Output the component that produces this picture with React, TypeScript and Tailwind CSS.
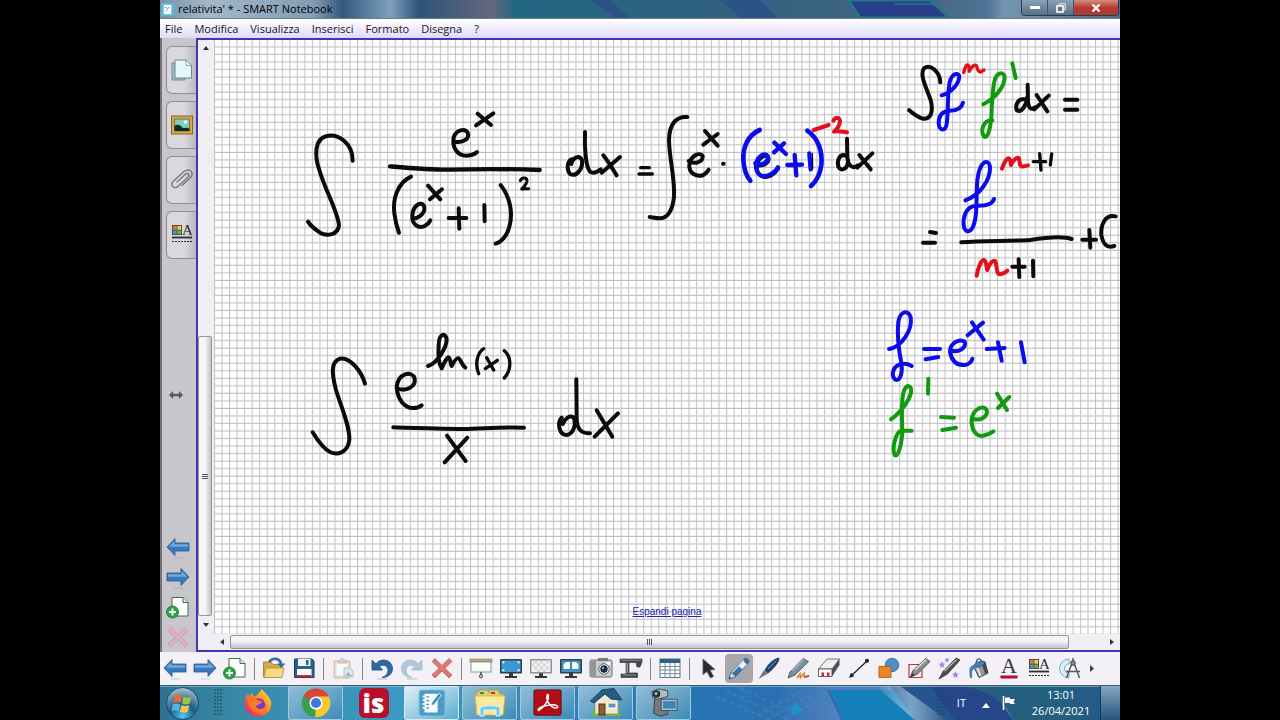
import type { ReactNode } from "react";

type Stroke = { d: string; c?: string; w?: number };

const BLUE = "#0c0cea";
const RED = "#e2101a";
const GREEN = "#109a10";
const INK = "#0b0b0b";

const inkGroups: { x: number; y: number; strokes: Stroke[] }[] = [
  {
    x: 300,
    y: 90,
    strokes: [
      { d: "M158 212 C158 160 115 130 80 138 C45 146 42 195 58 240 C75 300 112 360 117 405 C115 435 80 440 60 428 C45 418 32 408 24 395" },
      { d: "M465 155 C490 160 510 145 503 128 C495 113 468 120 461 142 C455 175 475 198 500 197 C515 196 525 192 531 186" },
      { d: "M533 71 L573 105 M580 70 L528 106" },
      { d: "M270 229 C330 234 400 240 450 239 C550 236 640 237 719 240", w: 13 },
      { d: "M333 260 C290 280 278 330 283 370 C286 395 292 415 297 428" },
      { d: "M338 385 C360 385 378 365 372 348 C364 332 340 345 337 375 C335 405 355 415 372 409 C382 405 388 398 391 391" },
      { d: "M384 287 L421 328 M426 298 L390 328" },
      { d: "M446 384 L499 384 M476 355 L478 416 M553 345 L554 394" },
      { d: "M602 285 C630 320 640 370 628 410 C620 440 605 455 587 461" },
      { d: "M661 272 C665 262 680 262 681 271 C682 282 672 290 665 297 L686 296", w: 9 },
      { d: "M815 208 C800 215 800 240 810 252 C830 262 850 235 846 210 C838 195 820 200 814 222 M855 126 C853 170 857 230 870 245 C880 252 893 245 902 238" },
      { d: "M910 196 C925 215 940 240 950 256 M960 201 L905 248" },
    ],
  },
  {
    x: 620,
    y: 100,
    strokes: [
      { d: "M62 203 L88 203 M57 222 L97 222", w: 10 },
      { d: "M202 51 C170 48 148 70 147 120 C148 180 165 230 162 290 C158 335 140 355 120 355 C108 355 98 352 89 351" },
      { d: "M206 183 C225 195 250 185 248 168 C240 155 212 165 208 195 C206 220 230 232 250 225 C258 220 263 214 266 209" },
      { d: "M255 93 L293 137 M293 102 L250 134 M309 191 L311 191" },
      { d: "M419 90 C385 105 368 140 370 180 C372 210 380 230 391 242", c: BLUE, w: 14 },
      { d: "M409 196 C428 202 450 189 446 173 C438 160 411 174 411 204 C414 231 434 237 453 227 C465 221 471 213 475 206", w: 10 },
      { d: "M406 190 C425 200 448 185 443 168 C435 155 408 170 408 200 C410 228 430 234 450 224 C462 218 470 210 474 202", c: BLUE, w: 13 },
      { d: "M463 128 L498 162 M492 130 L462 157", c: BLUE, w: 13 },
      { d: "M502 195 L546 194 M524 165 L529 226 M568 160 L572 208", c: BLUE, w: 13 },
      { d: "M577 160 L578 206", w: 4 },
      { d: "M562 92 C595 115 608 155 604 195 C600 225 588 245 573 258", c: BLUE, w: 14 },
      { d: "M581 90 L626 75 M640 62 C645 50 662 52 660 65 C658 80 648 90 642 95 C655 92 668 95 681 97", c: RED },
      { d: "M677 167 C660 160 650 180 655 200 C665 218 685 205 684 180 M681 116 L682 170 C683 198 700 208 714 196" },
      { d: "M718 165 L752 208 M757 160 L712 203" },
    ],
  },
  {
    x: 870,
    y: 50,
    strokes: [
      { d: "M211 97 C210 65 180 40 162 55 C148 75 168 110 182 150 C192 190 180 208 158 206 C140 200 128 190 117 180" },
      { d: "M215 136 C245 128 268 100 268 78 C262 65 240 72 237 110 C232 150 235 190 230 222 C226 245 208 243 206 220 C206 195 218 183 240 182 C262 182 275 175 279 158", c: BLUE },
      { d: "M281 68 C284 55 288 45 292 45 C300 45 296 60 298 64 C304 50 314 42 320 48 C322 60 325 66 332 66 L342 60", c: RED, w: 10 },
      { d: "M340 163 C375 145 405 110 404 80 C400 62 378 68 373 95 C366 130 366 160 364 200 C360 250 350 265 342 260 C332 245 336 210 367 211 M427 40 L437 84", c: GREEN },
      { d: "M462 148 C445 145 435 165 440 180 C455 190 470 165 472 140 M473 104 L474 155 C477 178 485 180 495 172 M500 135 L532 184 M536 137 L493 178" },
      { d: "M585 149 L622 149 M585 179 L622 179" },
      { d: "M286 451 C330 435 362 390 360 350 C355 325 330 330 322 390 C318 440 322 480 315 510 C308 545 292 552 283 535 C275 505 288 468 318 467 C350 468 368 462 372 447", c: BLUE },
      { d: "M396 356 C402 338 410 324 416 325 C424 328 420 340 423 345 C430 330 440 320 447 325 C450 338 448 350 458 350 L474 346", c: RED },
      { d: "M490 335 L527 335 M509 311 L513 360 M545 312 L541 345", w: 10 },
      { d: "M180 546 L198 549 M159 578 L195 578" },
      { d: "M274 577 C340 572 420 574 480 570 C530 562 580 558 605 567" },
      { d: "M637 569 L678 569 M658 540 L661 593" },
      { d: "M737 499 C705 492 692 525 694 555 C700 588 715 594 733 588" },
      { d: "M320 677 C325 650 335 628 342 630 C352 635 348 655 352 660 C358 640 370 628 376 634 C382 650 378 672 390 673 C400 672 406 668 412 662", c: RED },
      { d: "M427 650 L464 650 M446 628 L448 681 M489 632 L490 679" },
    ],
  },
  {
    x: 290,
    y: 320,
    strokes: [
      { d: "M225 191 C215 155 180 110 150 116 C122 125 125 160 138 210 C155 265 180 320 178 360 C172 402 140 405 120 396 C98 385 82 360 68 337" },
      { d: "M324 206 C350 215 378 200 374 175 C365 150 325 160 320 200 C322 240 345 265 370 264 C382 264 390 260 395 256" },
      { d: "M414 138 C440 130 470 85 470 58 C468 40 448 35 446 75 C444 105 445 130 455 145 C462 130 468 115 475 112 C484 115 480 135 485 138 C492 125 500 112 506 115 C514 120 515 135 526 143" },
      { d: "M581 86 C560 100 555 135 566 161 M590 113 L611 150 M622 121 L586 146 M643 92 C665 110 665 150 643 174", w: 10 },
      { d: "M310 322 C370 325 440 325 520 327 C580 326 640 320 702 323" },
      { d: "M471 347 L527 423 M532 353 L464 427" },
      { d: "M815 293 C800 310 808 345 830 345 C852 340 860 310 850 292 C840 285 825 295 818 312 M859 178 L860 290 C860 325 870 340 900 340" },
      { d: "M920 271 L967 350 M984 280 L914 350" },
    ],
  },
  {
    x: 870,
    y: 300,
    strokes: [
      { d: "M57 147 C95 140 128 90 122 52 C115 30 92 30 85 65 C80 110 88 160 95 195 C98 230 85 245 75 238 C62 225 68 195 98 192 C110 190 118 194 125 198", c: BLUE },
      { d: "M162 147 L210 147 M167 178 L205 171", c: BLUE },
      { d: "M243 152 C265 158 290 145 284 125 C270 115 240 128 240 155 C245 185 262 197 285 195 C300 192 305 185 307 176", c: BLUE },
      { d: "M306 67 L341 119 M339 68 L293 106 M350 147 L404 144 M384 127 L395 182 M453 127 L464 187", c: BLUE },
      { d: "M63 358 C95 335 128 290 123 265 C115 250 100 258 97 300 C94 340 97 370 97 400 C92 450 82 470 75 466 C65 450 75 395 95 392 L125 392", c: GREEN },
      { d: "M175 236 L174 281 M213 351 L252 353 M217 390 L258 383", c: GREEN },
      { d: "M306 355 C330 365 355 350 350 330 C340 315 312 325 305 355 C303 390 318 408 335 408 C350 405 362 400 370 394", c: GREEN },
      { d: "M381 281 L411 330 M418 291 L384 324", c: GREEN },
    ],
  },
];

function Ink() {
  return (
    <svg className="block h-[594px] w-[906px] flex-none" viewBox="214 40 906 594" role="img" aria-label="Integrali">
      {inkGroups.map((g, i) => (
        <g key={i} transform={`translate(${g.x} ${g.y}) scale(0.33333)`} fill="none" strokeLinecap="round" strokeLinejoin="round">
          {g.strokes.map((s, j) => (
            <path key={j} d={s.d} stroke={s.c ?? INK} strokeWidth={s.w ?? 12} />
          ))}
        </g>
      ))}
    </svg>
  );
}

function Paper() {
  return (
    <svg className="absolute inset-0 h-full w-full" aria-hidden="true">
      <defs>
        <pattern id="squares" width="7.53" height="7.53" patternUnits="userSpaceOnUse">
          <path d="M0.5 0 V7.53 M0 7 H7.53" stroke="#c2c2c4" strokeWidth="1.1" fill="none" />
        </pattern>
      </defs>
      <rect width="100%" height="100%" fill="#ffffff" />
      <rect width="100%" height="100%" fill="url(#squares)" />
    </svg>
  );
}

function Svg({ children }: { children: ReactNode }) {
  return (
    <svg viewBox="0 0 24 24" className="size-6 overflow-visible" aria-hidden="true">
      {children}
    </svg>
  );
}

const ArrowIcon = ({ flip = false }: { flip?: boolean }) => (
  <Svg>
    <g transform={flip ? "translate(24 0) scale(-1 1)" : undefined}>
      <path d="M1 11 L9 2.5 V7 H23 V15 H9 V19.5Z" fill="#3978bd" stroke="#27588f" strokeWidth="0.8" strokeLinejoin="round" />
      <path d="M3 10.8 L8.3 5 V8.3 H22 V10.8Z" fill="#6ea8dc" />
    </g>
    <path d="M8 22 H17" stroke="#77777a" strokeOpacity="0.4" strokeWidth="0.8" />
  </Svg>
);

const AddPageIcon = () => (
  <Svg>
    <path d="M6 1.5 H17 L22 6.5 V20 H6Z" fill="#fbfefb" stroke="#3f6a55" />
    <path d="M17 1.5 V6.5 H22" fill="#dce9e2" stroke="#3f6a55" />
    <circle cx="6.5" cy="16" r="6" fill="#2ca345" stroke="#17762c" strokeWidth="0.8" />
    <path d="M6.5 12.6 V19.4 M3.1 16 H9.9" stroke="#fff" strokeWidth="2" />
  </Svg>
);

const CrossIcon = ({ color, edge }: { color: string; edge: string }) => (
  <Svg>
    <path d="M2 4.5 L5 1.5 L12 8.5 L19 1.5 L22 4.5 L14.8 11.2 L22 18 L19 21 L12 14 L5 21 L2 18 L9.2 11.2Z" fill={color} stroke={edge} strokeWidth="0.8" />
  </Svg>
);

const OpenIcon = () => (
  <Svg>
    <path d="M1.5 5 H9 L11 7.5 H19 V20 H1.5Z" fill="#d5a949" stroke="#9a7422" strokeWidth="0.8" />
    <path d="M2 20.5 L4 11 H22 L20 20.5Z" fill="#f6da86" stroke="#b08a33" strokeWidth="0.8" />
    <path d="M7 5 C11 0 18 1 19 7" fill="none" stroke="#336e9e" strokeWidth="2.6" />
    <path d="M15 6.5 H23.5 L19.5 11Z" fill="#336e9e" />
  </Svg>
);

const SaveIcon = () => (
  <Svg>
    <path d="M2.5 2 H20 L22 4 V20.5 H2.5Z" fill="#28628c" stroke="#173f60" />
    <rect x="6" y="2" width="12.5" height="7" fill="#eef4f8" />
    <rect x="14" y="3" width="2.5" height="5" fill="#28628c" />
    <rect x="5" y="12" width="14.5" height="8" fill="#fff" />
    <rect x="5" y="18" width="14.5" height="2.2" fill="#d0233a" />
  </Svg>
);

const PasteIcon = () => (
  <Svg>
    <g opacity="0.65">
      <rect x="3" y="4" width="16" height="17" rx="1" fill="#e6ceb2" stroke="#ba9b80" />
      <rect x="5.5" y="6.5" width="11" height="12" fill="#fff" />
      <path d="M7.5 6 V3.5 H9.5 C9.5 0.5 13 0.5 13 3.5 H15 V6Z" fill="#c5c5c8" stroke="#8d8d90" strokeWidth="0.7" />
      <path d="M13 11 H18.5 L22 14 V20 H13Z" fill="#d5e6e4" stroke="#8caaa9" />
      <path d="M14 19 L17 15 L21 19Z" fill="#6d9ba0" />
    </g>
  </Svg>
);

const UndoIcon = ({ redo = false }: { redo?: boolean }) => (
  <Svg>
    <g transform={redo ? "translate(24 0) scale(-1 1)" : undefined} opacity={redo ? 0.55 : 1}>
      <path d="M6 7 C10 0.500 22 2 22.500 11.500 C22.500 17 18 20.500 12 20.500 C17 18.500 19 15 17.500 11 C16 7.500 12 7.500 9.500 9.500 L12.500 13 L2 13 L2 3Z" fill={redo ? "#7aa6c6" : "#2b6ba3"} stroke={redo ? "#668ba8" : "#1b4d80"} strokeWidth="0.8" strokeLinejoin="round" />
    </g>
    <path d="M7 22 H17" stroke="#bdbdc2" />
  </Svg>
);

const ShadeIcon = () => (
  <Svg>
    <rect x="1" y="2" width="22" height="3" fill="#c2a77a" stroke="#86724f" strokeWidth="0.6" />
    <rect x="2" y="5" width="20" height="10" fill="#f4fffa" stroke="#6e8580" strokeWidth="0.8" />
    <path d="M12 15 V18" stroke="#444" strokeWidth="1.4" />
    <circle cx="12" cy="19.3" r="1.6" fill="#ddd" stroke="#444" />
  </Svg>
);

const ScreenIcon = ({ kind }: { kind: "full" | "clear" | "dual" }) => (
  <Svg>
    <path d="M10 16 H14 V19 H18 V21 H6 V19 H10Z" fill="#37383b" />
    <rect x="1" y="2" width="22" height="14.5" rx="0.8" fill={kind === "clear" ? "#8f9093" : "#32404c"} />
    <rect x="2.5" y="3.5" width="19" height="11.5" fill={kind === "clear" ? "#f3f3f3" : "#3f97d2"} />
    {kind === "full" && (
      <path d="M4 6.5 V5 H5.5 M18.500 5 H20 V6.5 M20 12 V13.5 H18.500 M5.5 13.5 H4 V12" fill="none" stroke="#d9f3ff" strokeWidth="1.3" />
    )}
    {kind === "clear" && (
      <path d="M5 3.5h3v3h-3zM11 3.5h3v3h-3zM17 3.5h3v3h-3zM2.5 6.5h2.5v3h-2.5zM8 6.5h3v3h-3zM14 6.5h3v3h-3zM5 9.5h3v3h-3zM11 9.5h3v3h-3zM17 9.5h3v3h-3zM8 12.5h3v2.5h-3zM14 12.5h3v2.5h-3z" fill="#d4d5d6" />
    )}
    {kind === "dual" && (
      <g fill="#f5fbfa" stroke="#26678b" strokeWidth="0.7">
        <path d="M4 12.5 V7 L7 4.5 H11.5 V12.5Z" />
        <path d="M12.5 12.5 V4.5 H17 L20 7 V12.5Z" />
      </g>
    )}
  </Svg>
);

const CameraIcon = () => (
  <Svg>
    <rect x="1" y="3" width="22" height="17" rx="1.5" fill="#c9cacb" stroke="#6c6d70" />
    <rect x="2" y="4" width="5" height="15" fill="#929497" />
    <rect x="9" y="1" width="10" height="3" fill="#77797c" />
    <rect x="16.5" y="5" width="5" height="3" fill="#f8f8f8" />
    <circle cx="15" cy="12" r="5.3" fill="#ececec" stroke="#6a6b6e" />
    <circle cx="15" cy="12" r="3.7" fill="#1b2a41" />
    <circle cx="14" cy="11" r="1.2" fill="#7ca1c8" />
  </Svg>
);

const DocCameraIcon = () => (
  <Svg>
    <path d="M1 2 H23 V5 L21 10 H18 L17 5.5 H10 V16 H18.5 V20.5 H2 V17 H7 V5.5 H1Z" fill="#48494c" stroke="#2c2d30" strokeWidth="0.6" />
    <path d="M2 3.2 H22 M4 18 H17" stroke="#97989a" strokeWidth="0.9" />
    <path d="M8.2 6 V16" stroke="#b0b1b3" strokeWidth="1.2" />
  </Svg>
);

const TableIcon = () => (
  <Svg>
    <rect x="2" y="2" width="20" height="18.5" fill="#fff" stroke="#5d7283" />
    <rect x="2" y="2" width="20" height="4" fill="#2e6388" />
    <path d="M2 9.5 H22 M2 13 H22 M2 16.7 H22 M7 6 V20.5 M12 6 V20.5 M17 6 V20.5" stroke="#71899a" strokeWidth="1" />
  </Svg>
);

const PointerIcon = () => (
  <Svg>
    <path d="M6 2 V17.5 L10 14.5 L13.5 21 L16.5 19.5 L13 13 L18 12.5Z" fill="#2b2b2d" stroke="#5c5c5f" strokeWidth="0.8" />
  </Svg>
);

const PenIcon = () => (
  <Svg>
    <path d="M2 22 L4 15.5 L17 2 C19 0.500 23 3 21.500 5.500 L8.500 19.500Z" fill="#3674ab" stroke="#2c4b6b" strokeWidth="0.8" />
    <path d="M11 8.200 L15.500 3.600 L19.800 7.300 L15 12.200Z" fill="#eef3f6" />
    <path d="M5 15.500 L17 3.200" stroke="#c5dbec" strokeWidth="1.4" />
    <path d="M2 22 L4 15.500 L8.500 19.500Z" fill="#e2e0da" stroke="#56616c" strokeWidth="0.500" />
    <path d="M2 22 L2.800 19.500 L4.500 21Z" fill="#244c78" />
  </Svg>
);

const BrushIcon = () => (
  <Svg>
    <path d="M8 13 C12 6 17 2 22 1 C22.500 4 17.500 11 11 16Z" fill="#1d4772" stroke="#102e50" strokeWidth="0.8" />
    <path d="M1.500 22 L7 13 L11 16.500Z" fill="#70767d" />
    <path d="M11 12 L19.5 3.5" stroke="#6f9bc3" strokeWidth="1" />
  </Svg>
);

const CreativePenIcon = () => (
  <Svg>
    <path d="M1 21 L3 15 L16 1.5 L21.5 4.5 L8 18Z" fill="#7f9197" stroke="#3f484c" strokeWidth="0.8" />
    <path d="M5 13.8 L16.5 2.5" stroke="#b59be0" strokeWidth="1.8" />
    <path d="M8 16 L19.5 4.5" stroke="#5ca58f" strokeWidth="1.4" />
    <path d="M10 21 L13 17 L13.5 20.5 L17 16.5 L17.5 20 L22 19" fill="none" stroke="#d68b2f" strokeWidth="1.7" />
    <path d="M17.5 20 L22 19" stroke="#c6333c" strokeWidth="1.5" />
  </Svg>
);

const EraserIcon = () => (
  <Svg>
    <path d="M1.5 12 L10 2 H22.5 L15 12Z" fill="#eeeeef" stroke="#555" strokeWidth="0.8" />
    <path d="M15 12 L22.5 2 V8 L15 19.5Z" fill="#505054" />
    <path d="M1.5 12 H15 V19.5 H1.5Z" fill="#fbfbfb" stroke="#444" strokeWidth="0.8" />
    <path d="M4.5 15.5 H7 V19.5 H4.5Z M10 15.5 H12.5 V19.5 H10Z" fill="#c7283a" />
  </Svg>
);

const LineIcon = () => (
  <Svg>
    <path d="M4 19 L20 4" stroke="#202022" strokeWidth="1.3" />
    <circle cx="20" cy="3.8" r="2" fill="#202022" />
    <path d="M2 21 L4 15.8 L7.3 19.2Z" fill="#202022" />
  </Svg>
);

const ShapesIcon = () => (
  <Svg>
    <circle cx="15" cy="8" r="6.8" fill="#4a90c8" stroke="#2d6494" strokeWidth="0.8" />
    <rect x="2" y="9.5" width="12" height="11" fill="#f08423" stroke="#a85610" strokeWidth="0.8" />
  </Svg>
);

const ShapePenIcon = () => (
  <Svg>
    <path d="M14 7.5 H2 V20.5 H15 V13" fill="none" stroke="#c72f3d" strokeWidth="1.2" />
    <path d="M3.500 20 L6 13.500 L18.5 1.5 L23 4.5 L10.500 17Z" fill="#8b8e91" stroke="#414346" strokeWidth="0.9" />
    <path d="M8 13 L19 2.5" stroke="#e1e2e4" strokeWidth="1.5" />
    <path d="M3.500 20 L5 16 L8 18.200Z" fill="#333" />
  </Svg>
);

const MagicPenIcon = () => (
  <Svg>
    <path d="M2 22 L6 14.5 L19 1 L23 3 L10.5 17Z" fill="#4b4d51" stroke="#25262a" strokeWidth="0.7" />
    <path d="M7.5 14 L19.5 2.5" stroke="#bfc0c4" strokeWidth="1.1" />
    <path d="M5 4 L6 6.5 L8.5 6.7 L6.6 8.3 L7.3 11 L5 9.5 L2.7 11 L3.4 8.3 L1.5 6.7 L4 6.5Z M10 0.5 L10.7 2 L12.5 2.3 L11.2 3.5 L11.5 5.2 L10 4.4 L8.5 5.2 L8.8 3.5 L7.5 2.3 L9.3 2Z M18.5 14 L19.5 16.5 L22 16.7 L20.1 18.3 L20.8 21 L18.5 19.5 L16.2 21 L16.9 18.3 L15 16.7 L17.5 16.5Z" fill="#a184e4" />
  </Svg>
);

const FillIcon = () => (
  <Svg>
    <path d="M9 8 C9 0 15 0 15 7" fill="none" stroke="#555" strokeWidth="1.3" />
    <path d="M6.500 9 L18 5 L21 16 L12 20.5Z" fill="#97989b" stroke="#3f4043" />
    <path d="M15 7 L18 5.5 L20.5 15.5 L18 17Z" fill="#434448" />
    <path d="M10 10 L13.5 19" stroke="#e5e5e6" strokeWidth="2" />
    <ellipse cx="12.5" cy="7.2" rx="6" ry="2.5" transform="rotate(-20 12.5 7.2)" fill="#3f7fb8" stroke="#33475b" strokeWidth="0.7" />
    <path d="M8 8 C1.500 8.500 2 13 3 21 C5 22 5.500 20 5 16 C5 12.5 7 12 9.5 11Z" fill="#3c80bb" />
  </Svg>
);

const TextIcon = () => (
  <Svg>
    <text x="12" y="16" textAnchor="middle" fontSize="22" fill="#333335" className="font-['Liberation_Serif',serif]">A</text>
    <rect x="3.5" y="18.5" width="17" height="3" fill="#b3093d" />
  </Svg>
);

const PropertiesIcon = () => (
  <Svg>
    <rect x="2" y="2" width="10" height="10" fill="#4c4c45" />
    <path d="M3 3h3.7v3.7h-3.7z" fill="#df7b31" />
    <path d="M7.4 3h3.7v3.7h-3.7z" fill="#f0cf46" />
    <path d="M3 7.4h3.7v3.7h-3.7z" fill="#4a91cd" />
    <path d="M7.4 7.4h3.7v3.7h-3.7z" fill="#6fae4a" />
    <text x="17.5" y="12" textAnchor="middle" fontSize="15" fill="#2d2d30" className="font-['Liberation_Serif',serif]">A</text>
    <path d="M2 14.5 H22" stroke="#2d2d30" strokeWidth="1.8" />
    <path d="M2 18.5 H22" stroke="#2d2d30" strokeWidth="1.2" strokeDasharray="2 1" />
  </Svg>
);

const MeasureIcon = () => (
  <Svg>
    <path d="M12 2 A9.5 9.5 0 0 0 12 21 V16 A4.5 4.5 0 0 1 12 7Z" fill="#d8edf5" stroke="#74a5ba" strokeWidth="0.9" />
    <path d="M16 1 V5 M15 6 L9.5 21 M17 6 L22.5 21 M9 14.5 H23" fill="none" stroke="#55585c" strokeWidth="1.5" />
    <circle cx="16" cy="6" r="2.3" fill="#8a8d91" stroke="#44474b" />
  </Svg>
);

type Tool = { name: string; icon: ReactNode; active?: boolean };
const toolGroups: Tool[][] = [
  [
    { name: "Pagina precedente", icon: <ArrowIcon /> },
    { name: "Pagina successiva", icon: <ArrowIcon flip /> },
    { name: "Aggiungi pagina", icon: <AddPageIcon /> },
  ],
  [
    { name: "Apri", icon: <OpenIcon /> },
    { name: "Salva", icon: <SaveIcon /> },
  ],
  [{ name: "Incolla", icon: <PasteIcon /> }],
  [
    { name: "Annulla", icon: <UndoIcon /> },
    { name: "Ripeti", icon: <UndoIcon redo /> },
    { name: "Elimina", icon: <CrossIcon color="#df766f" edge="#b9655f" /> },
  ],
  [
    { name: "Tendina", icon: <ShadeIcon /> },
    { name: "Schermo intero", icon: <ScreenIcon kind="full" /> },
    { name: "Sfondo trasparente", icon: <ScreenIcon kind="clear" /> },
    { name: "Due pagine", icon: <ScreenIcon kind="dual" /> },
    { name: "Cattura schermo", icon: <CameraIcon /> },
    { name: "Document camera", icon: <DocCameraIcon /> },
  ],
  [{ name: "Tabella", icon: <TableIcon /> }],
  [
    { name: "Seleziona", icon: <PointerIcon /> },
    { name: "Penna", icon: <PenIcon />, active: true },
    { name: "Penna calligrafica", icon: <BrushIcon /> },
    { name: "Penna creativa", icon: <CreativePenIcon /> },
    { name: "Cancellino", icon: <EraserIcon /> },
    { name: "Linea", icon: <LineIcon /> },
    { name: "Forme", icon: <ShapesIcon /> },
    { name: "Penna riconoscimento forme", icon: <ShapePenIcon /> },
    { name: "Penna magica", icon: <MagicPenIcon /> },
    { name: "Riempimento", icon: <FillIcon /> },
    { name: "Testo", icon: <TextIcon /> },
    { name: "Stile", icon: <PropertiesIcon /> },
    { name: "Strumenti di misurazione", icon: <MeasureIcon /> },
  ],
];

function Toolbar() {
  return (
    <div role="toolbar" aria-label="Strumenti" className="flex h-[33px] flex-none items-center bg-[#f3f0f6]">
      {toolGroups.map((group, i) => (
        <div key={i} className="flex flex-none items-center">
          {i > 0 && (
            <span className="flex w-[9px] flex-none justify-center">
              <span className="h-[22px] w-px bg-[#88868b]" />
            </span>
          )}
          {group.map((t) => (
            <button key={t.name} aria-label={t.name} className="flex h-8 w-[30px] flex-none items-center justify-center">
              <span className={t.active ? "flex h-[29px] w-7 items-center justify-center rounded-sm bg-[#a9a7ac]" : "flex"}>{t.icon}</span>
            </button>
          ))}
        </div>
      ))}
      <button aria-label="Altri strumenti" className="flex h-8 w-4 flex-none items-center justify-center">
        <svg viewBox="0 0 4 7" className="h-[7px] w-1" aria-hidden="true">
          <path d="M0 0 L4 3.5 L0 7Z" fill="#3a3a3c" />
        </svg>
      </button>
    </div>
  );
}

const PagesIcon = () => (
  <Svg>
    <path d="M2 5 H15 V22 H2Z" fill="#9fbfc7" stroke="#5d808b" strokeWidth="0.8" />
    <path d="M5 2 H16 L21.5 7.5 V20 H5Z" fill="#e6f6fa" stroke="#5d808b" strokeWidth="0.9" />
    <path d="M16 2 V7.5 H21.5Z" fill="#fff" stroke="#5d808b" strokeWidth="0.7" />
  </Svg>
);

const GalleryIcon = () => (
  <Svg>
    <rect x="1.5" y="3" width="21" height="18" fill="#d8a84f" stroke="#8a6420" />
    <rect x="4.5" y="6" width="15" height="12" fill="#7ed0b9" stroke="#705120" strokeWidth="0.7" />
    <circle cx="15.5" cy="9" r="1.8" fill="#effff8" />
    <path d="M4.5 13 C8 10 11 13 13 15 C15 15 18 14 19.5 16 V18 H4.5Z" fill="#0d2d25" />
  </Svg>
);

const ClipIcon = () => (
  <Svg>
    <path d="M7 14 L15 6.5 C18 4 20 7 18 9 L8.5 18 C4 22 -0.5 17 3.5 13 L14 3.5 C20 -0.5 25 5 20 10 L12 17.5" fill="none" stroke="#76767a" strokeWidth="1.4" strokeLinecap="round" />
  </Svg>
);

const sideTabs = [
  { name: "Pagine", icon: <PagesIcon /> },
  { name: "Raccolta", icon: <GalleryIcon /> },
  { name: "Allegati", icon: <ClipIcon /> },
  { name: "Proprietà", icon: <PropertiesIcon /> },
];

function Sidebar() {
  return (
    <aside className="flex w-9 flex-none flex-col items-center border-l-2 border-[#747277] bg-[#c9c6cb] pt-2">
      <div className="flex w-full flex-col gap-[7px] pl-1">
        {sideTabs.map((t) => (
          <button
            key={t.name}
            aria-label={t.name}
            className="flex h-12 w-full items-center justify-center rounded-l-md border border-r-0 border-[#8f8d92] bg-linear-to-r from-[#dad8dc] from-60% to-[#bab7bd]"
          >
            {t.icon}
          </button>
        ))}
      </div>
      <div className="flex flex-1 items-center pr-1.5 pb-1.5">
        <button aria-label="Ridimensiona barra" className="flex">
          <svg viewBox="0 0 14 8" className="h-2 w-3.5" aria-hidden="true">
            <path d="M0 4 L4 0 V2.8 H10 V0 L14 4 L10 8 V5.2 H4 V8Z" fill="#5b595e" />
          </svg>
        </button>
      </div>
      <div className="flex flex-col gap-1.5 pr-0.5 pb-0.5">
        <button aria-label="Indietro"><ArrowIcon /></button>
        <button aria-label="Avanti"><ArrowIcon flip /></button>
        <button aria-label="Nuova pagina"><AddPageIcon /></button>
        <button aria-label="Elimina pagina"><CrossIcon color="#dcaecb" edge="#c795b6" /></button>
      </div>
    </aside>
  );
}

function Tri({ d, label, className }: { d: string; label: string; className: string }) {
  return (
    <button aria-label={label} className={className}>
      <svg viewBox="0 0 6 6" className="size-1.5" aria-hidden="true">
        <path d={d} fill="#333335" />
      </svg>
    </button>
  );
}

function VerticalScroll() {
  return (
    <div className="flex w-4 flex-none flex-col items-center bg-[#f0eef2]">
      <Tri label="Scorri su" d="M0 5 L3 1 L6 5Z" className="flex h-4 w-full flex-none items-center justify-center" />
      <div className="flex w-full flex-1 flex-col justify-end">
        <div className="flex h-1/2 w-[14px] flex-col items-center justify-center gap-px rounded-xs border border-[#98969b] bg-linear-to-r from-[#f7f6f8] from-50% to-[#c4c2c7]">
          <span className="h-px w-1.5 bg-[#55535a]" />
          <span className="h-px w-1.5 bg-[#55535a]" />
          <span className="h-px w-1.5 bg-[#55535a]" />
        </div>
      </div>
      <Tri label="Scorri giù" d="M0 1 L3 5 L6 1Z" className="flex h-[18px] w-full flex-none items-center justify-center" />
    </div>
  );
}

function HorizontalScroll() {
  return (
    <div className="flex h-4 flex-none items-center bg-[#f0eef2] pl-4">
      <Tri label="Scorri a sinistra" d="M5 0 L1 3 L5 6Z" className="flex h-full w-4 flex-none items-center justify-center" />
      <div className="flex h-full flex-1 items-center">
        <div className="flex h-[14px] w-[96%] items-center justify-center gap-px rounded-xs border border-[#98969b] bg-linear-to-b from-[#f4f3f5] from-45% to-[#c4c2c7]">
          <span className="h-1.5 w-px bg-[#55535a]" />
          <span className="h-1.5 w-px bg-[#55535a]" />
          <span className="h-1.5 w-px bg-[#55535a]" />
        </div>
      </div>
      <Tri label="Scorri a destra" d="M1 0 L5 3 L1 6Z" className="flex h-full w-4 flex-none items-center justify-center" />
    </div>
  );
}

function TitleBar() {
  return (
    <header className="relative flex h-[19px] flex-none items-center overflow-hidden border-b border-[#6d7f8e] bg-[#2c5777]">
      <svg className="absolute inset-0 h-full w-full" viewBox="0 0 960 18" preserveAspectRatio="none" aria-hidden="true">
        <defs>
          <linearGradient id="titleGlass">
            <stop offset="0" stopColor="#7591a8" />
            <stop offset="0.05" stopColor="#a3b8ca" />
            <stop offset="0.16" stopColor="#819db5" />
            <stop offset="0.19" stopColor="#34597d" />
            <stop offset="0.24" stopColor="#7ea0bd" />
            <stop offset="0.27" stopColor="#2c5478" />
            <stop offset="0.345" stopColor="#65667f" />
            <stop offset="0.37" stopColor="#236782" />
            <stop offset="0.6" stopColor="#31617f" />
            <stop offset="0.8" stopColor="#466784" />
            <stop offset="0.86" stopColor="#4e7293" />
            <stop offset="0.88" stopColor="#7596b3" />
            <stop offset="1" stopColor="#4f6c8a" />
          </linearGradient>
        </defs>
        <rect width="960" height="18" fill="url(#titleGlass)" />
        <path d="M688 0 H770 L790 18 H700Z" fill="#284088" stroke="#28758a" strokeWidth="3" />
        <path d="M430 0 H450 L470 18 H455Z M560 0 H600 L618 18 H580Z" fill="#2c4c88" opacity="0.7" />
        <path d="M735 4 H775" stroke="#28758a" strokeWidth="1.5" />
      </svg>
      <div className="relative flex h-full w-full items-center gap-1 pl-px">
        <svg viewBox="0 0 14 14" className="size-[13px]" aria-hidden="true">
          <rect width="14" height="14" rx="1" fill="#5fb7df" />
          <path d="M3 2 H11 V12 H3Z" fill="#fff" />
          <path d="M5 9 L9 4 M4 5 H6" stroke="#418fb7" />
        </svg>
        <h1 className="flex-1 text-[11px] leading-4 text-black">relativita&#39; * - SMART Notebook</h1>
        <div className="mr-px flex h-4 self-start overflow-hidden rounded-b-sm border border-t-0 border-[#273b4e]">
          <button aria-label="Riduci a icona" className="flex w-[26px] items-center justify-center border-r border-[#41566a] bg-linear-to-b from-[#8ba2b6] to-[#566f86]">
            <span className="h-[3px] w-2.5 bg-white" />
          </button>
          <button aria-label="Ripristina" className="flex w-[26px] items-center justify-center border-r border-[#41566a] bg-linear-to-b from-[#8ba2b6] to-[#566f86]">
            <svg viewBox="0 0 10 10" className="size-2.5" aria-hidden="true">
              <path d="M3 2.5 V0.8 H9.2 V7 H7.5" fill="none" stroke="#eee" strokeWidth="1" />
              <rect x="1" y="3" width="6" height="6" fill="#65727d" stroke="#fff" strokeWidth="1.6" />
            </svg>
          </button>
          <button aria-label="Chiudi" className="flex w-11 items-center justify-center bg-linear-to-b from-[#d48c82] via-[#b83b2f] to-[#a83c34]">
            <svg viewBox="0 0 10 8" className="h-2 w-2.5" aria-hidden="true">
              <path d="M1.5 0.5 L8.5 7.5 M8.5 0.5 L1.5 7.5" stroke="#fff" strokeWidth="2.2" />
            </svg>
          </button>
        </div>
      </div>
    </header>
  );
}

const menus = ["File", "Modifica", "Visualizza", "Inserisci", "Formato", "Disegna", "?"];

const Firefox = () => (
  <svg viewBox="0 0 32 32" className="size-[30px]" aria-hidden="true">
    <defs>
      <linearGradient id="fox" x1="1" y1="0" x2="0" y2="1">
        <stop offset="0" stopColor="#ffe43d" />
        <stop offset="0.45" stopColor="#ff8a20" />
        <stop offset="0.8" stopColor="#f33858" />
        <stop offset="1" stopColor="#d51d80" />
      </linearGradient>
    </defs>
    <path d="M20 1 C23 5 28 8 30 15 C31 24 25 30 16 30.5 C7 30 1 24 2 15 C2 10 4 8 5 6 L7 9 L9 5 L12 9 C15 9 17 5 20 1Z" fill="url(#fox)" />
    <circle cx="16.5" cy="18" r="7.2" fill="#743bc4" />
    <path d="M4 11 C9 8 13 10 16 13 L21 14 C19 18 14 17 14 20 C17 25 24 22 25 16 C28 27 14 30 9 23 C6 20 6 14 4 11Z" fill="#fb7827" />
  </svg>
);

const Chrome = () => (
  <svg viewBox="0 0 32 32" className="size-[30px]" aria-hidden="true">
    <path d="M16 16 L2.5 9 A15 15 0 0 1 29.5 9Z" fill="#d94537" />
    <path d="M16 16 L29.5 9 A15 15 0 0 1 15 31Z" fill="#f7c92c" />
    <path d="M16 16 L15 31 A15 15 0 0 1 2.5 9Z" fill="#3c9d4e" />
    <path d="M16 9 H29.5 L22.5 18Z" fill="#f7c92c" />
    <path d="M2.5 9 L9.5 20 L16 16Z" fill="#3c9d4e" />
    <circle cx="16" cy="16" r="7" fill="#fff" />
    <circle cx="16" cy="16" r="5.4" fill="#3f79da" />
  </svg>
);

const NotebookApp = () => (
  <svg viewBox="0 0 32 32" className="size-[30px]" aria-hidden="true">
    <rect x="2" y="2" width="28" height="28" rx="3" fill="#4c9bc7" stroke="#8fcae6" />
    <rect x="8" y="6" width="14" height="20" rx="1" fill="#f7fcff" />
    <path d="M6 9 H10 M6 13 H10 M6 17 H10 M6 21 H10" stroke="#e9f6ff" strokeWidth="2" />
    <path d="M10 9.500 H13 M10 13.500 H13 M10 17.500 H13 M10 21.500 H13" stroke="#4b91b8" strokeWidth="1.200" />
    <path d="M15 19 L16 15.500 L23.500 5.500 L26 7.500 L18.500 17.500Z" fill="#3f87b1" stroke="#f2fbff" strokeWidth="0.800" />
  </svg>
);

const Explorer = () => (
  <svg viewBox="0 0 32 32" className="size-8" aria-hidden="true">
    <path d="M2 5 H5 V3 H13 L15 6 V3 H24 L26 7 H30 V26 H2Z" fill="#e8cc68" stroke="#b39b42" strokeWidth="0.8" />
    <path d="M6 5 h4 v2 h-4z" fill="#3a8f49" />
    <path d="M17 5 h4 v2 h-4z" fill="#b83b31" />
    <path d="M1 9 H31 L29 28 H3Z" fill="#f8e99d" stroke="#c9b45c" strokeWidth="0.8" />
    <path d="M6 29 V21 C6 18 26 18 26 21 V29 H22 V23 H10 V29Z" fill="#79c8e7" stroke="#d9f5ff" />
  </svg>
);

const Acrobat = () => (
  <svg viewBox="0 0 32 32" className="size-[30px]" aria-hidden="true">
    <rect x="1" y="2" width="29" height="27" rx="1.5" fill="#b30d17" stroke="#6c0b12" />
    <path d="M6 24 C12 21 17 13 16.5 8 C15.5 5 13.5 9 15.5 14 C18 20 23 22 26 21 C28 18 21 17 13 19 C8 20 4 23 6 24Z" fill="none" stroke="#fff" strokeWidth="1.5" />
  </svg>
);

const House = () => (
  <svg viewBox="0 0 32 32" className="size-8" aria-hidden="true">
    <path d="M2 24 C2 20 30 20 30 24 V29 H2Z" fill="#73b93f" />
    <path d="M5 14 L13 6 H24 L28 14 V27 H5Z" fill="#f1e8d2" stroke="#8f866e" strokeWidth="0.7" />
    <path d="M0.5 14 L12 3 L24 1.5 L32 13 L21 12 L15 7 L4 16Z" fill="#275d87" stroke="#153f61" />
    <rect x="9" y="17" width="6" height="11" fill="#8f5d36" stroke="#543219" />
    <rect x="18" y="16" width="8" height="5" fill="#6097b8" stroke="#fff" />
  </svg>
);

const Camcorder = () => (
  <svg viewBox="0 0 32 32" className="size-[30px]" aria-hidden="true">
    <path d="M6 10 H14 V20 L20 24 V28 L12 30 L5 27Z" fill="#75797f" stroke="#383d43" />
    <path d="M3 4 L10 1 L20 3 V9 L9 12 L4 10Z" fill="#b7bcc2" stroke="#41464d" />
    <circle cx="8" cy="6.5" r="4" fill="#292e35" />
    <circle cx="7.5" cy="6" r="1.5" fill="#b8cbdf" />
    <path d="M13 12 H30 V24 H13Z" fill="#b9c0c6" stroke="#42484f" />
    <path d="M15 14 H28.5 V22 H15Z" fill="#3486bd" />
  </svg>
);

const apps: { name: string; icon: ReactNode; open?: boolean; bright?: boolean }[] = [
  { name: "Firefox", icon: <Firefox /> },
  { name: "Chrome", icon: <Chrome />, open: true },
  {
    name: "Argo is",
    icon: <span className="flex size-[30px] items-center justify-center rounded-md bg-[#b80f2b] font-['Open_Sans',sans-serif] text-[26px] leading-[30px] font-extrabold text-white">is</span>,
  },
  { name: "SMART Notebook", icon: <NotebookApp />, open: true, bright: true },
  { name: "Esplora risorse", icon: <Explorer />, open: true },
  { name: "Adobe Reader", icon: <Acrobat />, open: true },
  { name: "Casa", icon: <House />, open: true },
  { name: "Videocamera", icon: <Camcorder />, open: true },
];

function appClass(open?: boolean, bright?: boolean) {
  if (bright) return "flex h-[34px] w-[55px] items-center justify-center rounded-xs border border-[#d2edf7] bg-linear-to-br from-[#dcf0f7] to-[#5cacd0]";
  if (open) return "flex h-[34px] w-[55px] items-center justify-center rounded-xs border border-[#9fcbe0] bg-linear-to-br from-[#91bfd8] to-[#3b8bb8]";
  return "flex h-[34px] w-[55px] items-center justify-center";
}

const Dots = () => (
  <svg viewBox="0 0 8 28" className="h-7 w-2 flex-none" aria-hidden="true">
    <path d="M1 0 V28 M4 0 V28 M7 0 V28" stroke="#17445e" strokeWidth="1.3" strokeDasharray="1.5 2" />
  </svg>
);

function Taskbar() {
  return (
    <footer className="relative flex h-[35px] flex-none items-center overflow-hidden border-t border-[#375d75] bg-[#2b7faa]">
      <svg className="absolute inset-0 h-full w-full" viewBox="0 0 960 34" preserveAspectRatio="none" aria-hidden="true">
        <defs>
          <linearGradient id="taskGlass">
            <stop offset="0" stopColor="#2d7291" />
            <stop offset="0.08" stopColor="#3889a6" />
            <stop offset="0.25" stopColor="#3a9ac4" />
            <stop offset="0.45" stopColor="#317fb5" />
            <stop offset="0.56" stopColor="#2874b2" />
            <stop offset="0.64" stopColor="#2b70b0" />
            <stop offset="0.7" stopColor="#4d80bd" />
          </linearGradient>
          <linearGradient id="beam">
            <stop offset="0" stopColor="#ffffff" stopOpacity="0" />
            <stop offset="0.5" stopColor="#b6d4ee" stopOpacity="0.6" />
            <stop offset="1" stopColor="#ffffff" stopOpacity="0" />
          </linearGradient>
        </defs>
        <rect width="960" height="34" fill="url(#taskGlass)" />
        <g fill="none" stroke="#5090c4" strokeWidth="2" strokeDasharray="5 3" opacity="0.35">
          <path d="M555 10 L610 34 M565 4 L625 32 M580 2 L635 28 M590 34 L640 6 M605 34 L650 10 M625 34 L655 16" />
        </g>
        <path d="M628 22 l9 -4 l6 6 l-7 5z" fill="#169bd0" opacity="0.7" />
        <path d="M667 4 H740 L800 34 H682Z" fill="#147fb9" />
        <path d="M668 4 L682 34" stroke="#4c50b0" />
        <path d="M730 0 H780 L800 34 H755Z" fill="#24558e" />
        <path d="M770 0 H830 L853 34 H795Z" fill="#26468a" />
        <path d="M800 0 H930 V34 H853 Q845 12 815 3Z" fill="#245f7f" />
        <path d="M905 0 H960 V34 H925Z" fill="#265b88" />
        <path d="M715 0 H740 L787 34 H755Z" fill="url(#beam)" />
        <rect width="960" height="1" fill="#a7d1e1" opacity="0.5" />
      </svg>
      <div className="relative flex h-full w-full items-center">
        <button aria-label="Start" className="ml-[5px] flex flex-none">
          <svg viewBox="0 0 36 36" className="size-[35px]" aria-hidden="true">
            <defs>
              <radialGradient id="orb" cx="0.5" cy="0.9" r="0.9">
                <stop offset="0" stopColor="#55c7ed" />
                <stop offset="0.45" stopColor="#1c5c88" />
                <stop offset="1" stopColor="#a5c4d3" />
              </radialGradient>
            </defs>
            <circle cx="18" cy="18" r="16.5" fill="url(#orb)" stroke="#154466" />
            <path d="M10 10 Q14 8 17.5 10.5 L16 17.5 Q12 15.5 8.5 17.5Z" fill="#e96a32" />
            <path d="M19 11 Q23 13 27 11 L25.5 18 Q21.5 20 17.5 18Z" fill="#99c549" />
            <path d="M8 19 Q12 17 15.7 19 L14 26 Q10 24 6.5 26Z" fill="#56b4e5" />
            <path d="M17 19.5 Q21 21.5 25 19.5 L23.5 26.5 Q19.5 28.5 15.5 26.5Z" fill="#f6c744" />
          </svg>
        </button>
        <div className="flex w-7 flex-none justify-center pl-2"><Dots /></div>
        <nav className="ml-0.5 flex flex-none gap-[3px]">
          {apps.map((a) => (
            <button key={a.name} aria-label={a.name} className={appClass(a.open, a.bright)}>
              {a.icon}
            </button>
          ))}
        </nav>
        <div className="flex-1" />
        <div className="flex flex-none items-center text-white">
          <Dots />
          <span className="ml-3 text-[11px] leading-4">IT</span>
          <button aria-label="Mostra icone nascoste" className="ml-4 flex">
            <svg viewBox="0 0 8 5" className="mt-1 h-[5px] w-2" aria-hidden="true"><path d="M0 5 L4 0 L8 5Z" fill="#fff" /></svg>
          </button>
          <button aria-label="Centro operativo" className="ml-3 flex">
            <svg viewBox="0 0 14 14" className="size-3.5" aria-hidden="true">
              <path d="M1.5 0 V14" stroke="#fff" strokeWidth="1.6" />
              <path d="M3 1.5 H8 V3 H13 L11.5 5.5 L13 8 H8 V7 H3Z" fill="#fff" />
            </svg>
          </button>
          <time dateTime="2021-04-26T13:01" className="ml-3 flex w-[66px] flex-col items-center text-[11px] leading-4">
            <span>13:01</span>
            <span>26/04/2021</span>
          </time>
        </div>
        <button aria-label="Mostra desktop" className="ml-1.5 h-full w-5 flex-none border-l border-[#143c5d] bg-linear-to-b from-[#87a9c2] to-[#25547b]" />
      </div>
    </footer>
  );
}

export default function App() {
  return (
    <div className="flex h-screen justify-center overflow-hidden bg-black font-['Open_Sans','Noto_Sans',sans-serif]">
      <div className="flex w-3/4 flex-col">
        <TitleBar />
        <nav className="flex h-[19px] flex-none items-center gap-3 bg-linear-to-b from-white to-[#e1daf8] pl-[5px]">
          {menus.map((m) => (
            <button key={m} className="text-[11px] leading-4 text-[#1d1022]">{m}</button>
          ))}
        </nav>
        <div className="flex min-h-0 flex-1">
          <Sidebar />
          <div className="flex min-w-0 flex-1 flex-col border-2 border-r-0 border-[#4136b8]">
            <div className="flex min-h-0 flex-1">
              <VerticalScroll />
              <main className="relative flex min-w-0 flex-1 overflow-hidden">
                <Paper />
                <div className="relative flex w-full">
                  <Ink />
                </div>
                <div className="absolute inset-x-0 bottom-3.5 flex justify-center">
                  <a href="#espandi" className="font-['Liberation_Sans',sans-serif] text-[10px] leading-4 text-[#2323b0] underline">Espandi pagina</a>
                </div>
              </main>
            </div>
            <HorizontalScroll />
          </div>
        </div>
        <Toolbar />
        <Taskbar />
      </div>
    </div>
  );
}
